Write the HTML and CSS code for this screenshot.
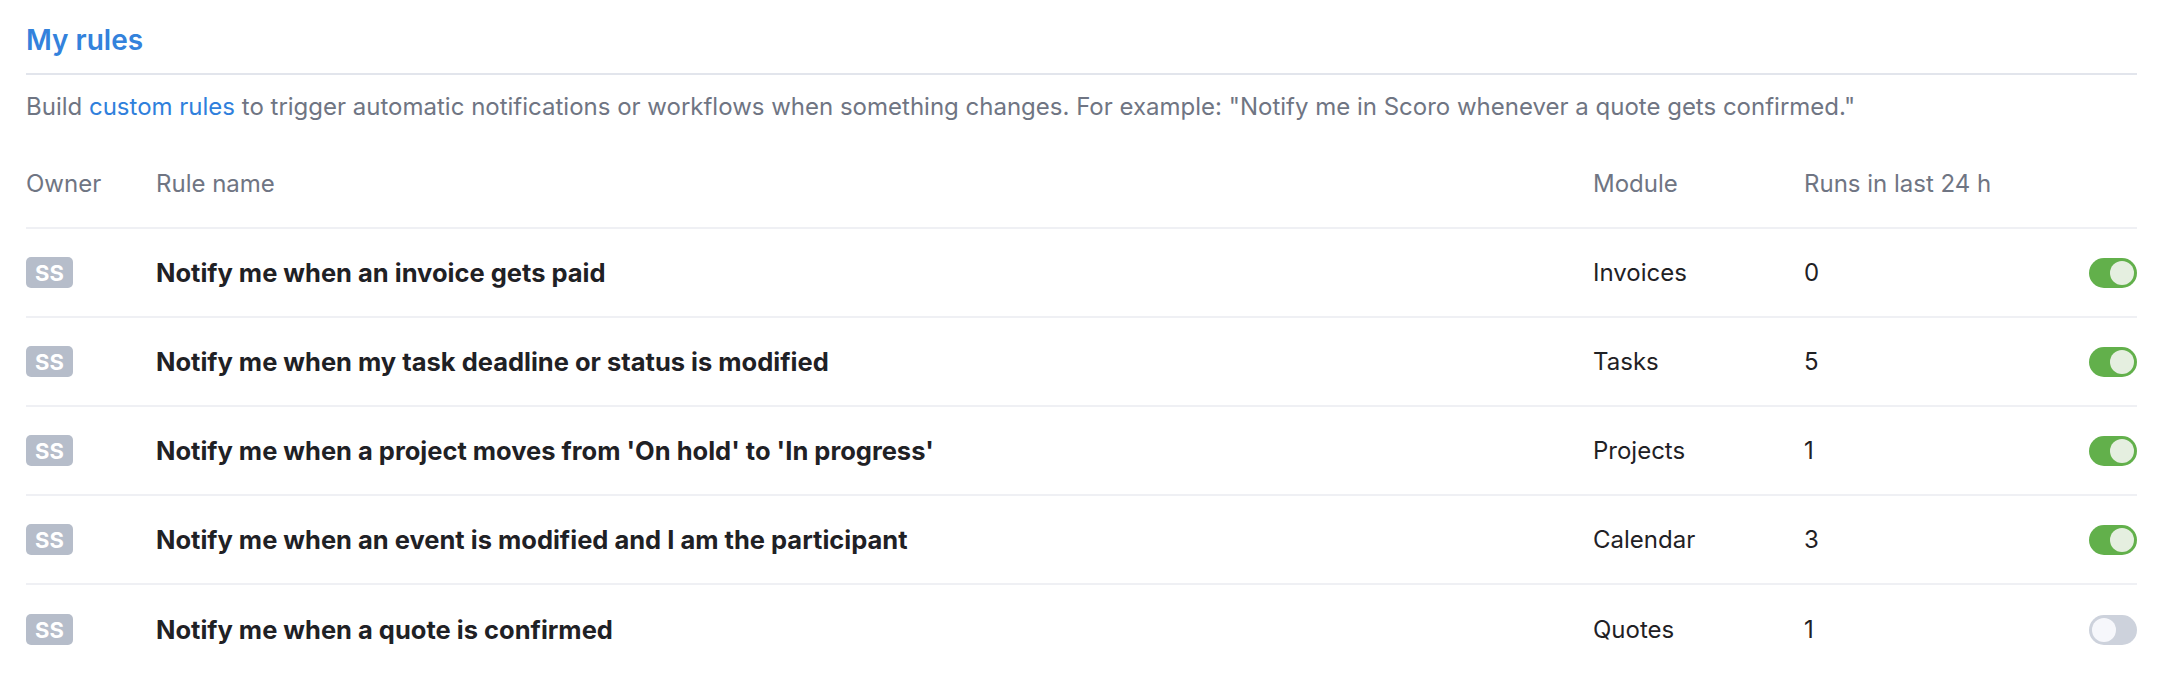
FILE: index.html
```html
<!DOCTYPE html>
<html lang="en">
<head>
<meta charset="utf-8">
<title>My rules</title>
<link rel="stylesheet" href="styles.css">
</head>
<body>
<div class="page">
  <div class="section-head">
    <h2 class="section-title">My rules</h2>
  </div>
  <p class="intro">Build <a class="link" href="#">custom rules</a> to trigger automatic notifications or workflows when something changes. For example: "Notify me in Scoro whenever a quote gets confirmed."</p>

  <div class="rules">
    <div class="row head">
      <div class="cell">Owner</div>
      <div class="cell">Rule name</div>
      <div class="cell">Module</div>
      <div class="cell">Runs in last 24 h</div>
      <div class="cell"></div>
    </div>
    <div class="row">
      <div class="cell"><span class="badge">SS</span></div>
      <div class="cell name">Notify me when an invoice gets paid</div>
      <div class="cell">Invoices</div>
      <div class="cell">0</div>
      <div class="cell end"><span class="toggle on"><span class="knob"></span></span></div>
    </div>
    <div class="row">
      <div class="cell"><span class="badge">SS</span></div>
      <div class="cell name">Notify me when my task deadline or status is modified</div>
      <div class="cell">Tasks</div>
      <div class="cell">5</div>
      <div class="cell end"><span class="toggle on"><span class="knob"></span></span></div>
    </div>
    <div class="row">
      <div class="cell"><span class="badge">SS</span></div>
      <div class="cell name">Notify me when a project moves from 'On hold' to 'In progress'</div>
      <div class="cell">Projects</div>
      <div class="cell">1</div>
      <div class="cell end"><span class="toggle on"><span class="knob"></span></span></div>
    </div>
    <div class="row">
      <div class="cell"><span class="badge">SS</span></div>
      <div class="cell name">Notify me when an event is modified and I am the participant</div>
      <div class="cell">Calendar</div>
      <div class="cell">3</div>
      <div class="cell end"><span class="toggle on"><span class="knob"></span></span></div>
    </div>
    <div class="row last">
      <div class="cell"><span class="badge">SS</span></div>
      <div class="cell name">Notify me when a quote is confirmed</div>
      <div class="cell">Quotes</div>
      <div class="cell">1</div>
      <div class="cell end"><span class="toggle"><span class="knob"></span></span></div>
    </div>
  </div>
</div>
</body>
</html>
```

FILE: styles.css
```css
* { box-sizing: border-box; }

body {
  margin: 0;
  background: #ffffff;
  font-family: Inter, "Noto Sans", "Liberation Sans", sans-serif;
  color: #1f2125;
}

.page {
  padding: 0 25px 0 26px;
}

.section-head {
  padding: 22px 0 15px;
  border-bottom: 2px solid #e2e5ec;
}

.section-title {
  margin: 0;
  font-size: 28px;
  line-height: 36px;
  font-weight: 600;
  color: #3382dc;
}

.intro {
  margin: 17px 0 18px;
  font-size: 24px;
  line-height: 30px;
  color: #6f7583;
}

.link {
  color: #2f80dc;
  text-decoration: none;
}

.rules {
  display: flex;
  flex-direction: column;
}

.row {
  display: grid;
  grid-template-columns: 130px 1fr 211px 285px 48px;
  align-items: center;
  height: 89px;
  border-bottom: 2px solid #eff0f4;
  font-size: 24px;
}

.row.last {
  border-bottom: none;
}

.row.head {
  color: #6f7583;
}

.cell.name {
  font-size: 25.5px;
  font-weight: 700;
  color: #1f2125;
}

.cell.end {
  display: flex;
  justify-content: flex-end;
}

.badge {
  display: inline-flex;
  align-items: center;
  justify-content: center;
  width: 47px;
  height: 31px;
  border-radius: 5px;
  background: #b6bdca;
  color: #ffffff;
  font-size: 22px;
  font-weight: 700;
}

.toggle {
  display: flex;
  align-items: center;
  width: 48px;
  height: 30px;
  padding: 0 3px;
  border-radius: 15px;
  background: #cdd2dc;
  justify-content: flex-start;
}

.toggle.on {
  background: #62b04b;
  justify-content: flex-end;
}

.knob {
  width: 24px;
  height: 24px;
  border-radius: 50%;
  background: #f6f7fb;
}

.toggle.on .knob {
  background: #e5efe0;
}
```
